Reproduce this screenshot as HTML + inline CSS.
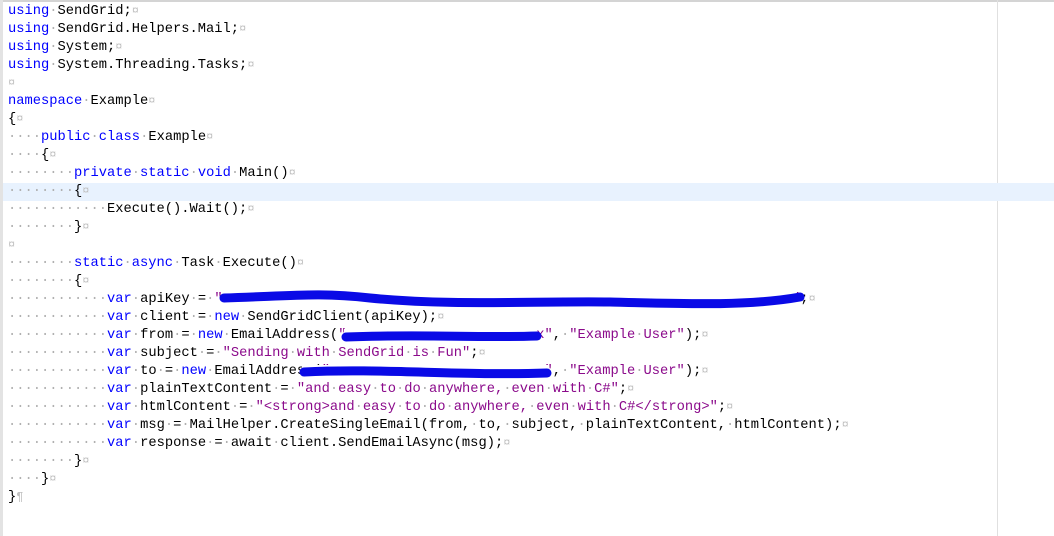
<!DOCTYPE html>
<html><head><meta charset="utf-8"><style>
html,body{margin:0;padding:0;background:#fff;width:1054px;height:536px;overflow:hidden;position:relative}
#top{position:absolute;left:0;top:0;width:1054px;height:2px;background:#d4d4d4}
#left{position:absolute;left:0;top:0;width:3px;height:536px;background:#e3e3e3}
#right{position:absolute;left:997px;top:0;width:1px;height:536px;background:#e0e0e0}
#hl{position:absolute;left:3px;top:183px;width:1051px;height:18px;background:#e8f2fe}
pre{position:absolute;left:8px;top:3px;margin:0;font-family:"Liberation Mono",monospace;font-size:13.75px;line-height:18px;color:#000}
.k{color:#0000ff}.s{color:#8b0a8b}.w{color:#b0b0b0}.p{color:#c0c0c0;font-size:12px;line-height:0}
svg{position:absolute;left:0;top:0}
</style></head><body>
<div id="top"></div><div id="left"></div><div id="right"></div><div id="hl"></div>
<pre><span class="k">using</span><span class="w">·</span>SendGrid;<span class="p">¤</span>
<span class="k">using</span><span class="w">·</span>SendGrid.Helpers.Mail;<span class="p">¤</span>
<span class="k">using</span><span class="w">·</span>System;<span class="p">¤</span>
<span class="k">using</span><span class="w">·</span>System.Threading.Tasks;<span class="p">¤</span>
<span class="p">¤</span>
<span class="k">namespace</span><span class="w">·</span>Example<span class="p">¤</span>
{<span class="p">¤</span>
<span class="w">····</span><span class="k">public</span><span class="w">·</span><span class="k">class</span><span class="w">·</span>Example<span class="p">¤</span>
<span class="w">····</span>{<span class="p">¤</span>
<span class="w">········</span><span class="k">private</span><span class="w">·</span><span class="k">static</span><span class="w">·</span><span class="k">void</span><span class="w">·</span>Main()<span class="p">¤</span>
<span class="w">········</span>{<span class="p">¤</span>
<span class="w">············</span>Execute().Wait();<span class="p">¤</span>
<span class="w">········</span>}<span class="p">¤</span>
<span class="p">¤</span>
<span class="w">········</span><span class="k">static</span><span class="w">·</span><span class="k">async</span><span class="w">·</span>Task<span class="w">·</span>Execute()<span class="p">¤</span>
<span class="w">········</span>{<span class="p">¤</span>
<span class="w">············</span><span class="k">var</span><span class="w">·</span>apiKey<span class="w">·</span>=<span class="w">·</span><span class="s">"SG.xxxxxxxxxxxxxxxxxxxxxxxxxxxxxxxxxxxxxxxxxxxxxxxxxxxxxxxxxxxxxxxxxx"</span>;<span class="p">¤</span>
<span class="w">············</span><span class="k">var</span><span class="w">·</span>client<span class="w">·</span>=<span class="w">·</span><span class="k">new</span><span class="w">·</span>SendGridClient(apiKey);<span class="p">¤</span>
<span class="w">············</span><span class="k">var</span><span class="w">·</span>from<span class="w">·</span>=<span class="w">·</span><span class="k">new</span><span class="w">·</span>EmailAddress(<span class="s">"xxxxxxxxxxxxxxxxxxxxxxxx"</span>,<span class="w">·</span><span class="s">"Example<span class="w">·</span>User"</span>);<span class="p">¤</span>
<span class="w">············</span><span class="k">var</span><span class="w">·</span>subject<span class="w">·</span>=<span class="w">·</span><span class="s">"Sending<span class="w">·</span>with<span class="w">·</span>SendGrid<span class="w">·</span>is<span class="w">·</span>Fun"</span>;<span class="p">¤</span>
<span class="w">············</span><span class="k">var</span><span class="w">·</span>to<span class="w">·</span>=<span class="w">·</span><span class="k">new</span><span class="w">·</span>EmailAddress(<span class="s">"xxxxxxxxxxxxxxxxxxxxxxxxxx"</span>,<span class="w">·</span><span class="s">"Example<span class="w">·</span>User"</span>);<span class="p">¤</span>
<span class="w">············</span><span class="k">var</span><span class="w">·</span>plainTextContent<span class="w">·</span>=<span class="w">·</span><span class="s">"and<span class="w">·</span>easy<span class="w">·</span>to<span class="w">·</span>do<span class="w">·</span>anywhere,<span class="w">·</span>even<span class="w">·</span>with<span class="w">·</span>C#"</span>;<span class="p">¤</span>
<span class="w">············</span><span class="k">var</span><span class="w">·</span>htmlContent<span class="w">·</span>=<span class="w">·</span><span class="s">"&lt;strong&gt;and<span class="w">·</span>easy<span class="w">·</span>to<span class="w">·</span>do<span class="w">·</span>anywhere,<span class="w">·</span>even<span class="w">·</span>with<span class="w">·</span>C#&lt;/strong&gt;"</span>;<span class="p">¤</span>
<span class="w">············</span><span class="k">var</span><span class="w">·</span>msg<span class="w">·</span>=<span class="w">·</span>MailHelper.CreateSingleEmail(from,<span class="w">·</span>to,<span class="w">·</span>subject,<span class="w">·</span>plainTextContent,<span class="w">·</span>htmlContent);<span class="p">¤</span>
<span class="w">············</span><span class="k">var</span><span class="w">·</span>response<span class="w">·</span>=<span class="w">·</span>await<span class="w">·</span>client.SendEmailAsync(msg);<span class="p">¤</span>
<span class="w">········</span>}<span class="p">¤</span>
<span class="w">····</span>}<span class="p">¤</span>
}<span class="p">¶</span></pre>
<svg width="1054" height="536">
<rect x="222" y="291" width="574" height="16" fill="#fff"/>
<path d="M224 298 C290 296 320 292 370 298 C450 306 530 301 610 302 C690 304 750 306 800 297" stroke="#0a0ae6" stroke-width="9" fill="none" stroke-linecap="round"/>
<rect x="344" y="329" width="192" height="14" fill="#fff"/>
<path d="M346 337 C420 334 480 338 537 336" stroke="#0a0ae6" stroke-width="9" fill="none" stroke-linecap="round"/>
<rect x="302" y="365" width="246" height="14" fill="#fff"/>
<path d="M304 372 C380 368 460 376 547 373" stroke="#0a0ae6" stroke-width="9" fill="none" stroke-linecap="round"/>
</svg>
</body></html>
